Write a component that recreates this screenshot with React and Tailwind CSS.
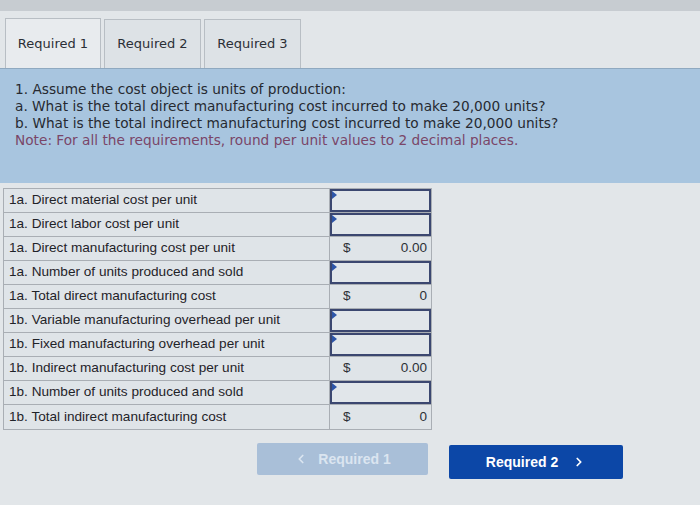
import { ChevronLeft, ChevronRight } from "lucide-react";

const ROWS = [
  { label: "1a. Direct material cost per unit", input: true },
  { label: "1a. Direct labor cost per unit", input: true },
  { label: "1a. Direct manufacturing cost per unit", value: "0.00" },
  { label: "1a. Number of units produced and sold", input: true },
  { label: "1a. Total direct manufacturing cost", value: "0" },
  { label: "1b. Variable manufacturing overhead per unit", input: true },
  { label: "1b. Fixed manufacturing overhead per unit", input: true },
  { label: "1b. Indirect manufacturing cost per unit", value: "0.00" },
  { label: "1b. Number of units produced and sold", input: true },
  { label: "1b. Total indirect manufacturing cost", value: "0" },
];

const TABS = ["Required 1", "Required 2", "Required 3"];

const Tab = ({ label, active }) => (
  <div
    className={
      active
        ? "w-[96px] h-[50px] flex items-center justify-center border border-b-0 border-[#b8bec4] bg-[#e8ebee] text-[13px] text-[#2b2f36]"
        : "w-[97px] h-[49px] flex items-center justify-center border border-b-0 border-[#b8bec4] bg-[#dde2e6] text-[13px] text-[#2b2f36]"
    }
  >
    {label}
  </div>
);

const AnswerRow = ({ row }) => (
  <div className="flex h-[24px] border-b border-[#a9aeb4] last:border-b-0">
    <div className="w-[326px] flex items-center pl-[5px] border-r border-[#a9aeb4] text-[13.6px] text-[#1f2329]">
      {row.label}
    </div>
    <div className="flex-1 flex items-center">
      {row.input ? (
        <div className="relative w-full h-full border-2 border-[#3b4770] bg-[#e1e6ea]">
          <span className="absolute left-0 top-0 w-0 h-0 border-t-[4px] border-b-[4px] border-l-[5px] border-t-transparent border-b-transparent border-l-[#2d55a8]" />
        </div>
      ) : (
        <div className="w-full flex items-center justify-between pl-[13px] pr-[4px] text-[13.5px] text-[#2d3137]">
          <span>$</span>
          <span>{row.value}</span>
        </div>
      )}
    </div>
  </div>
);

export default function App() {
  return (
    <div className="w-[700px] h-[505px] bg-[#e2e6e9] font-['DejaVu_Sans',sans-serif] overflow-hidden">
      <div className="h-[11px] bg-[#c7ccd1]" />
      <div className="flex items-end gap-[3px] pl-[5px] pt-[7px]">
        {TABS.map((tab, i) => (
          <Tab key={tab} label={tab} active={i === 0} />
        ))}
      </div>
      <div className="h-[115px] bg-[#a8c5df] border-t border-[#8fa9c0] pl-[15px] pt-[12px] text-[13.7px] leading-[17px] text-[#262a31]">
        <p>1. Assume the cost object is units of production:</p>
        <p>a. What is the total direct manufacturing cost incurred to make 20,000 units?</p>
        <p>b. What is the total indirect manufacturing cost incurred to make 20,000 units?</p>
        <p className="text-[#7a4668]">Note: For all the requirements, round per unit values to 2 decimal places.</p>
      </div>
      <div className="pl-[3px] pt-[5px] font-['Liberation_Sans',sans-serif]">
        <div className="w-[429px] border border-[#a9aeb4] bg-[#dfe4e8]">
          {ROWS.map((row) => (
            <AnswerRow key={row.label} row={row} />
          ))}
        </div>
        <div className="flex items-start gap-[21px] pl-[254px] pt-[13px]">
          <button
            type="button"
            disabled
            className="w-[171px] h-[32px] flex items-center justify-center gap-[10px] bg-[#a9bfd8] text-[#dbe5f0] text-[14px] font-bold rounded-[2px]"
          >
            <ChevronLeft size={14} strokeWidth={3} />
            Required 1
          </button>
          <button
            type="button"
            className="mt-[2px] w-[174px] h-[34px] flex items-center justify-center gap-[14px] bg-[#0c47a7] text-white text-[14px] font-bold rounded-[2px]"
          >
            Required 2
            <ChevronRight size={14} strokeWidth={3} />
          </button>
        </div>
      </div>
    </div>
  );
}
